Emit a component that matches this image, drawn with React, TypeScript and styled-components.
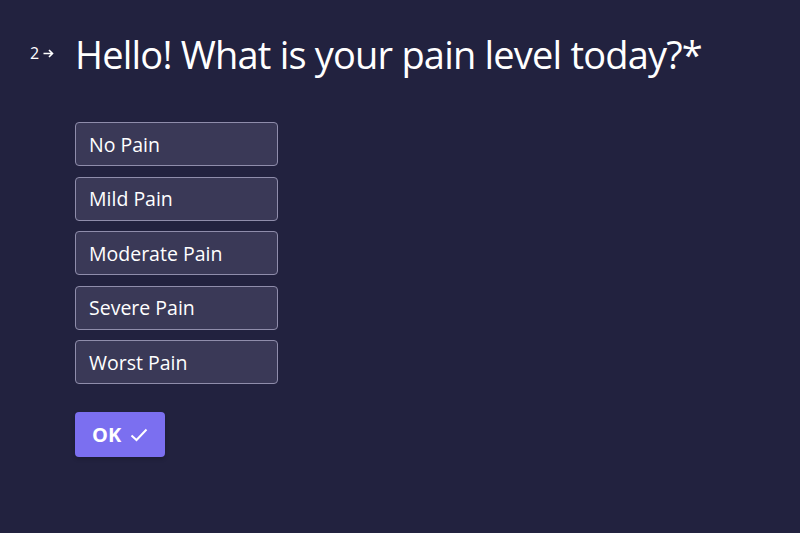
import styled, { createGlobalStyle } from "styled-components";

const GlobalStyle = createGlobalStyle`
  html, body {
    margin: 0;
    padding: 0;
    background: #22223f;
    font-family: "Open Sans", "Noto Sans", sans-serif;
  }
`;

const options = ["No Pain", "Mild Pain", "Moderate Pain", "Severe Pain", "Worst Pain"];

function App() {
  return (
    <>
      <GlobalStyle />
      <Page>
        <Question>
          <Counter>
            2
            <svg width="11" height="9" viewBox="0 0 11 9">
              <path d="M0.5 4.5H9.5M6 1L9.5 4.5L6 8" stroke="#fff" strokeWidth="1.6" fill="none" />
            </svg>
          </Counter>
          <Title>Hello! What is your pain level today?*</Title>
        </Question>
        <Choices>
          {options.map((opt) => (
            <Choice key={opt}>{opt}</Choice>
          ))}
        </Choices>
        <OkButton>
          OK
          <svg width="18" height="14" viewBox="0 0 18 14">
            <path d="M1.5 7.5L6.5 12L16.5 1.5" stroke="#fff" strokeWidth="2" fill="none" />
          </svg>
        </OkButton>
      </Page>
    </>
  );
}

export default App;

const Page = styled.div`
  width: 800px;
  height: 533px;
  box-sizing: border-box;
  padding: 29px 0 0 30px;
  color: #fff;
`;

const Question = styled.div`
  display: flex;
  align-items: flex-start;
`;

const Counter = styled.div`
  display: flex;
  align-items: center;
  gap: 4px;
  width: 45px;
  margin-top: 15px;
  font-size: 16px;
  line-height: 18px;
`;

const Title = styled.h1`
  margin: 0;
  font-weight: 400;
  font-size: 38px;
  line-height: 50px;
  letter-spacing: -0.8px;
`;

const Choices = styled.div`
  display: flex;
  flex-direction: column;
  gap: 10.5px;
  margin: 43px 0 0 45px;
`;

const Choice = styled.button`
  width: 203px;
  height: 44px;
  box-sizing: border-box;
  padding: 0 13px;
  text-align: left;
  background: #3a3957;
  border: 1px solid #8f8dab;
  border-radius: 4px;
  color: #fff;
  font-family: inherit;
  font-size: 19.5px;
`;

const OkButton = styled.button`
  display: flex;
  align-items: center;
  gap: 9px;
  margin: 28px 0 0 45px;
  height: 45px;
  padding: 0 17px;
  background: #7b6ff0;
  border: none;
  border-radius: 4px;
  box-shadow: 0 2px 4px rgba(0, 0, 0, 0.2);
  color: #fff;
  font-family: inherit;
  font-weight: 700;
  font-size: 20px;
`;
